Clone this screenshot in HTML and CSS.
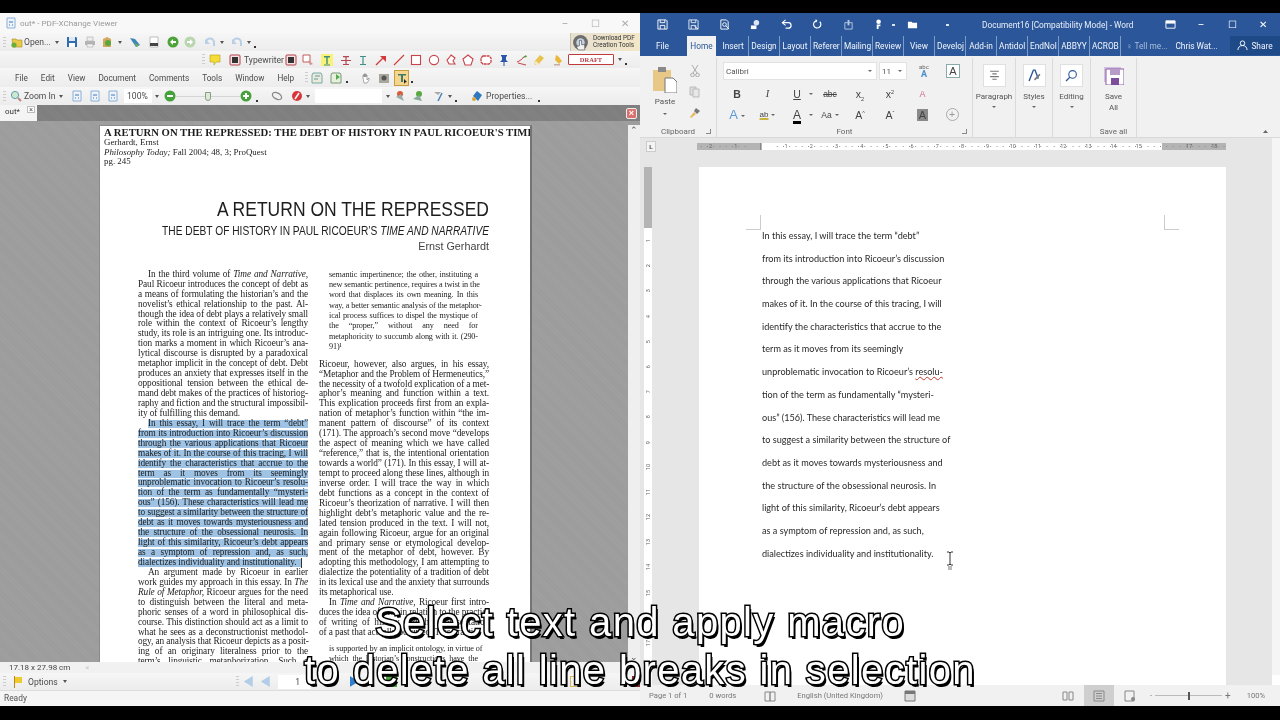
FILE: index.html
```html
<!DOCTYPE html>
<html lang="en">
<head>
    <meta charset="UTF-8">
    <title>Delete line breaks macro</title>
    <link rel="stylesheet" href="styles.css">
</head>
<body>

<svg class="defs" width="0" height="0">
    <symbol id="folder" viewBox="0 0 12 12"><path d="M1 3h4l1 1h5v7H2z" fill="#e9c94a" stroke="#a98a20" stroke-width=".6"/><circle cx="3" cy="9" r="2.6" fill="#6aae3a"/></symbol>
    <symbol id="save" viewBox="0 0 12 12"><path d="M1 1h9l1 1v9H1z" fill="#2f6db0"/><path d="M3 1h6v4H3z" fill="#dfe9f4"/><path d="M3 7h6v4H3z" fill="#fff"/></symbol>
    <symbol id="print" viewBox="0 0 12 12"><path d="M3 1h6v4H3z" fill="#eee" stroke="#999" stroke-width=".5"/><path d="M1 5h10v4H1z" fill="#b5b5b5"/><path d="M3 8h6v3H3z" fill="#f4f4f4" stroke="#999" stroke-width=".5"/></symbol>
    <symbol id="box" viewBox="0 0 12 12"><path d="M2 3l4-2 4 2v8H2z" fill="#d4a75e"/><circle cx="7" cy="7" r="3" fill="#5ba63c"/></symbol>
    <symbol id="scan" viewBox="0 0 12 12"><path d="M1 2l5 1 5 6-4 2z" fill="#3f86b8"/><path d="M5 7l5 2-2 2z" fill="#6ab04a"/></symbol>
    <symbol id="ocr" viewBox="0 0 12 12"><path d="M2 1h8v10H2z" fill="#fff" stroke="#999" stroke-width=".6"/><path d="M2 7h8v3H2z" fill="#444"/></symbol>
    <symbol id="back" viewBox="0 0 12 12"><circle cx="6" cy="6" r="5.5" fill="#4ba33a"/><path d="M3 6l3-3v2h3v2H6v2z" fill="#fff"/></symbol>
    <symbol id="fwd" viewBox="0 0 12 12"><circle cx="6" cy="6" r="5.5" fill="#b9d7ae"/><path d="M9 6L6 3v2H3v2h3v2z" fill="#fff"/></symbol>
    <symbol id="undo" viewBox="0 0 12 12"><path d="M2 7a4 4 0 0 1 8-1v4" fill="none" stroke="#b8cfe6" stroke-width="2"/><path d="M1 3v5h5z" fill="#b8cfe6"/></symbol>
    <symbol id="note" viewBox="0 0 12 12"><path d="M1 1h10v7H7l-2 3V8H1z" fill="#f6dc36" stroke="#b79f16" stroke-width=".6"/></symbol>
    <symbol id="stamp" viewBox="0 0 12 12"><rect x="1" y="1" width="10" height="10" rx="1" fill="#f3e3e3" stroke="#b4404a"/><rect x="3" y="3" width="6" height="6" fill="#333"/></symbol>
    <symbol id="edit" viewBox="0 0 12 12"><path d="M1 1h7v7H1z" fill="#fff" stroke="#c25a5a"/><path d="M6 6l5 4-3 1z" fill="#d88"/></symbol>
    <symbol id="thl" viewBox="0 0 12 12"><rect width="12" height="12" fill="#f7f27c"/><path d="M3 2h6v1.400H6.700V10H5.300V3.400H3zM3 10.500h6v1H3z" fill="#3f8f78"/></symbol>
    <symbol id="tst" viewBox="0 0 12 12"><path d="M3 2h6v1.200H6.600V10H5.400V3.200H3zM1 6h10v1H1z" fill="#b5454f"/><path d="M3 10h6v1H3z" fill="#b5454f"/></symbol>
    <symbol id="tin" viewBox="0 0 12 12"><path d="M3 2h6v1H6.600v7H9v1H3v-1h2.400V3H3z" fill="#3f8f88"/></symbol>
    <symbol id="arrow" viewBox="0 0 12 12"><path d="M1 11l8-8" stroke="#d23a3a" stroke-width="1.300"/><path d="M5 2h6v6z" fill="#d23a3a"/></symbol>
    <symbol id="line" viewBox="0 0 12 12"><path d="M1 11L11 1" stroke="#d23a3a" stroke-width="1.100"/></symbol>
    <symbol id="rect" viewBox="0 0 12 12"><rect x="1.500" y="1.500" width="9" height="9" fill="#fff" stroke="#c9434a" stroke-width="1.100"/></symbol>
    <symbol id="circ" viewBox="0 0 12 12"><circle cx="6" cy="6" r="4.600" fill="#fff" stroke="#c9434a" stroke-width="1.100"/></symbol>
    <symbol id="poly" viewBox="0 0 12 12"><path d="M6 1l4 3-2 3 2 3H4L2 6l2-2z" fill="#fff" stroke="#c9434a" stroke-width="1.100"/></symbol>
    <symbol id="pent" viewBox="0 0 12 12"><path d="M6 1l5 4-2 6H3L1 5z" fill="#fff" stroke="#c9434a" stroke-width="1.100"/></symbol>
    <symbol id="cloud" viewBox="0 0 12 12"><path d="M3 2h6l2 2v4l-2 2H3L1 8V4z" fill="#fff" stroke="#c9434a" stroke-width="1.300" stroke-dasharray="3 .6"/></symbol>
    <symbol id="pin" viewBox="0 0 12 12"><path d="M3 1h6v1l-1 1v3l2 2H2l2-2V3L3 2zM5.500 8h1v4h-1z" fill="#2b55a8"/></symbol>
    <symbol id="pen" viewBox="0 0 12 12"><path d="M1 8c3-1 5-3 8-6M2 9c3 1 5 1 8 2" stroke="#c9434a" fill="none"/><path d="M6 4l4-3 1 2z" fill="#5a9a3a"/></symbol>
    <symbol id="eraser" viewBox="0 0 12 12"><path d="M7 1l4 3-6 7H2L1 8z" fill="#e8c44e"/><path d="M1 8l2 3h2l1-1-3-3z" fill="#f4ead0"/></symbol>
    <symbol id="hl" viewBox="0 0 12 12"><path d="M3 1l2 1 4 5-3 3-4-4z" fill="#eab93a"/><path d="M1 10h6v1.500H1z" fill="#caa"/></symbol>
    <symbol id="pgl" viewBox="0 0 12 12"><path d="M2 1h8l1 2v8H1V3z" fill="#ebe9d8" stroke="#7aa"/><path d="M4 4h5M3 7h4" stroke="#69a"/></symbol>
    <symbol id="pgr" viewBox="0 0 12 12"><path d="M2 1h8l1 2v8H1V3z" fill="#e6f0dc" stroke="#797"/><path d="M6 2l4 3-4 3z" fill="#5a5"/></symbol>
    <symbol id="handi" viewBox="0 0 12 12"><path d="M3 6V3h1v2-3h1v3-3h1v3-2h1v5l2-2v2l-2 3H4z" fill="#fff" stroke="#777" stroke-width=".6"/></symbol>
    <symbol id="cam" viewBox="0 0 12 12"><rect x="1" y="2" width="10" height="9" fill="#a9a69c"/><circle cx="6" cy="6" r="2.500" fill="#555"/></symbol>
    <symbol id="tsel" viewBox="0 0 12 12"><path d="M2 2h8v1.500H7V10H5V3.500H2z" fill="#3f7a70"/><path d="M8 7l3 3-2 .5-1 1.500z" fill="#222"/></symbol>
    <symbol id="zoom" viewBox="0 0 12 12"><circle cx="5" cy="5" r="3.600" fill="#cfe9cf" stroke="#5aa0b5"/><path d="M8 8l3 3" stroke="#b87" stroke-width="2"/></symbol>
    <symbol id="pgv" viewBox="0 0 12 12"><path d="M2 1h8v10H2z" fill="#eef3fa" stroke="#8ab0d8"/><path d="M4 8h1M7 8h1M4 5h4" stroke="#3d79b5"/></symbol>
    <symbol id="minus" viewBox="0 0 12 12"><circle cx="6" cy="6" r="5.500" fill="#45a23a"/><path d="M3 5h6v2H3z" fill="#fff"/></symbol>
    <symbol id="plus" viewBox="0 0 12 12"><circle cx="6" cy="6" r="5.500" fill="#45a23a"/><path d="M3 5h2V3h2v2h2v2H7v2H5V7H3z" fill="#fff"/></symbol>
    <symbol id="clip" viewBox="0 0 12 12"><ellipse cx="6" cy="6" rx="5" ry="3" transform="rotate(30 6 6)" fill="none" stroke="#888" stroke-width="1.300"/></symbol>
    <symbol id="redc" viewBox="0 0 12 12"><circle cx="6" cy="6" r="5" fill="#d8353a"/><path d="M4 9l4-6" stroke="#fff" stroke-width="1.500"/></symbol>
    <symbol id="gear1" viewBox="0 0 12 12"><circle cx="6" cy="4" r="3" fill="#d65a3a"/><path d="M2 7l8 4-3-7z" fill="#9aa"/></symbol>
    <symbol id="gear2" viewBox="0 0 12 12"><circle cx="7" cy="4" r="3" fill="#58a83e"/><path d="M1 9l6-4 3 6z" fill="#8a9"/></symbol>
    <symbol id="wand" viewBox="0 0 12 12"><path d="M1 2h7l-3 3z" fill="#aaa"/><path d="M9 3L5 11" stroke="#4a86b8" stroke-width="1.600"/></symbol>
    <symbol id="props" viewBox="0 0 12 12"><path d="M2 6l4-5 5 4-4 6z" fill="#2f78c0"/><circle cx="3" cy="9" r="2" fill="#d9a640"/></symbol>
    <symbol id="flag" viewBox="0 0 12 12"><path d="M2 0h1v12H2z" fill="#b58a20"/><path d="M3 1h7v6H3z" fill="#f0c92e"/></symbol>
</svg>

<main class="screen">

    <!-- PDF viewer, left half -->
    <section class="viewer">
        <header class="v-title">
            <svg class="t t-app"><use href="#pgv"/></svg>
            <span class="v-name">out* - PDF-XChange Viewer</span>
            <span class="wbtn wb-min">–</span><span class="wbtn">☐</span><span class="wbtn">✕</span>
        </header>

        <div class="tb tb-1">
            <i class="grip g3"></i>
            <svg class="t g5"><use href="#folder"/></svg><span class="lb lb-open g1">Open...</span><i class="car g5"></i>
            <svg class="t g7"><use href="#save"/></svg>
            <svg class="t g6"><use href="#print"/></svg>
            <svg class="t g5"><use href="#box"/></svg><i class="car g5"></i>
            <svg class="t g7"><use href="#scan"/></svg>
            <svg class="t g7"><use href="#ocr"/></svg>
            <svg class="t g7"><use href="#back"/></svg>
            <svg class="t g5"><use href="#fwd"/></svg>
            <svg class="t g8"><use href="#undo"/></svg><i class="car g4"></i>
            <svg class="t g7"><use href="#undo"/></svg><i class="car g4"></i><i class="dot g3"></i>
            <div class="dl">
                <svg class="dl-ic" viewBox="0 0 16 16"><circle cx="8" cy="8" r="7" fill="#6e6e6e"/><circle cx="8" cy="8" r="4" fill="#c5d4e4"/><path d="M7 6h2v4h3v5H6l-2-3 3-1z" fill="#f2f2f2" stroke="#333" stroke-width=".5"/></svg>
                <span class="dl-t">Download PDF<br>Creation Tools</span>
            </div>
        </div>

        <div class="tb tb-2">
            <i class="grip"></i>
            <svg class="t g4"><use href="#note"/></svg>
            <svg class="t g8"><use href="#stamp"/></svg><span class="lb lb-type g3">Typewriter</span>
            <svg class="t g5"><use href="#stamp"/></svg>
            <svg class="t g5"><use href="#edit"/></svg>
            <svg class="t g7"><use href="#thl"/></svg>
            <svg class="t g7"><use href="#tst"/></svg>
            <svg class="t g5"><use href="#tin"/></svg>
            <svg class="t g6"><use href="#arrow"/></svg>
            <svg class="t g6"><use href="#line"/></svg>
            <svg class="t g5"><use href="#rect"/></svg>
            <svg class="t g6"><use href="#circ"/></svg>
            <svg class="t g5"><use href="#poly"/></svg>
            <svg class="t g5"><use href="#pent"/></svg>
            <svg class="t g6"><use href="#cloud"/></svg>
            <svg class="t g6"><use href="#pin"/></svg>
            <svg class="t g6"><use href="#pen"/></svg>
            <svg class="t g5"><use href="#eraser"/></svg>
            <svg class="t g8"><use href="#hl"/></svg>
            <span class="draft g3">DRAFT</span><i class="car g4"></i><i class="dot g3"></i>
        </div>

        <div class="tb tb-3">
            <nav class="menu">
                <span>File</span><span>Edit</span><span>View</span><span>Document</span><span>Comments</span><span>Tools</span><span>Window</span><span>Help</span>
            </nav>
            <i class="grip g11"></i>
            <svg class="t g3"><use href="#pgl"/></svg>
            <svg class="t g7"><use href="#pgr"/></svg><i class="dot g4"></i>
            <svg class="t g12"><use href="#handi"/></svg>
            <svg class="t g6"><use href="#cam"/></svg>
            <span class="tsel g4"><svg class="t"><use href="#tsel"/></svg></span><i class="dot g2"></i>
        </div>

        <div class="tb tb-4">
            <i class="grip g3"></i>
            <svg class="t g4"><use href="#zoom"/></svg><span class="lb lb-zoom g2">Zoom In</span><i class="car g5"></i>
            <svg class="t g8"><use href="#pgv"/></svg>
            <svg class="t g6"><use href="#pgv"/></svg>
            <svg class="t g6"><use href="#pgv"/></svg>
            <span class="field f-zoom g5">100%</span><i class="car g3"></i>
            <svg class="t g5"><use href="#minus"/></svg>
            <span class="zslide"><i></i></span>
            <svg class="t"><use href="#plus"/></svg><i class="dot g4"></i>
            <svg class="t g13"><use href="#clip"/></svg>
            <svg class="t g8"><use href="#redc"/></svg><i class="car g3"></i>
            <span class="field f-find g5"></span><i class="car g4"></i>
            <svg class="t g4"><use href="#gear1"/></svg>
            <svg class="t g6"><use href="#gear2"/></svg>
            <svg class="t g9"><use href="#wand"/></svg><i class="car g3"></i><i class="dot g3"></i>
            <svg class="t g14"><use href="#props"/></svg><span class="lb g3">Properties...</span><i class="dot g6"></i>
        </div>

        <div class="v-tabs">
            <span class="v-tab">out*<b class="v-x">×</b></span>
            <span class="v-close">×</span>
        </div>

        <div class="v-body">
            <article class="pdf">
                <h1 class="p-head">A RETURN ON THE REPRESSED: THE DEBT OF HISTORY IN PAUL RICOEUR'S TIME AND NARRATIVE</h1>
                <p class="p-meta">Gerhardt, Ernst<br><em>Philosophy Today;</em> Fall 2004; 48, 3; ProQuest<br>pg. 245</p>
                <h2 class="p-title">A RETURN ON THE REPRESSED</h2>
                <h3 class="p-sub">THE DEBT OF HISTORY IN PAUL RICOEUR’S <em>TIME AND NARRATIVE</em></h3>
                <div class="p-auth">Ernst Gerhardt</div>
                <div class="cols">
                    <div class="col">
                        <div class="ln ind last">In the third volume of <em>Time and Narrative,</em></div>
                        <div class="ln">Paul Ricoeur introduces the concept of debt as</div>
                        <div class="ln">a means of formulating the historian’s and the</div>
                        <div class="ln">novelist’s ethical relationship to the past. Al-</div>
                        <div class="ln">though the idea of debt plays a relatively small</div>
                        <div class="ln">role within the context of Ricoeur’s lengthy</div>
                        <div class="ln">study, its role is an intriguing one. Its introduc-</div>
                        <div class="ln">tion marks a moment in which Ricoeur’s ana-</div>
                        <div class="ln">lytical discourse is disrupted by a paradoxical</div>
                        <div class="ln">metaphor implicit in the concept of debt. Debt</div>
                        <div class="ln">produces an anxiety that expresses itself in the</div>
                        <div class="ln">oppositional tension between the ethical de-</div>
                        <div class="ln">mand debt makes of the practices of historiog-</div>
                        <div class="ln">raphy and fiction and the structural impossibil-</div>
                        <div class="ln end">ity of fulfilling this demand.</div>
                        <div class="hl-first"><div class="ln hl">In this essay, I will trace the term “debt”</div></div>
                        <div class="ln hl">from its introduction into Ricoeur’s discussion</div>
                        <div class="ln hl">through the various applications that Ricoeur</div>
                        <div class="ln hl">makes of it. In the course of this tracing, I will</div>
                        <div class="ln hl">identify the characteristics that accrue to the</div>
                        <div class="ln hl">term as it moves from its seemingly</div>
                        <div class="ln hl">unproblematic invocation to Ricoeur’s resolu-</div>
                        <div class="ln hl">tion of the term as fundamentally “mysteri-</div>
                        <div class="ln hl">ous” (156). These characteristics will lead me</div>
                        <div class="ln hl">to suggest a similarity between the structure of</div>
                        <div class="ln hl">debt as it moves towards mysteriousness and</div>
                        <div class="ln hl">the structure of the obsessional neurosis. In</div>
                        <div class="ln hl">light of this similarity, Ricoeur’s debt appears</div>
                        <div class="ln hl">as a symptom of repression and, as such,</div>
                        <div class="ln hl end hl-last">dialectizes individuality and institutionality.</div>
                        <div class="ln ind">An argument made by Ricoeur in earlier</div>
                        <div class="ln">work guides my approach in this essay. In <em>The</em></div>
                        <div class="ln"><em>Rule of Metaphor,</em> Ricoeur argues for the need</div>
                        <div class="ln">to distinguish between the literal and meta-</div>
                        <div class="ln">phoric senses of a word in philosophical dis-</div>
                        <div class="ln">course. This distinction should act as a limit to</div>
                        <div class="ln">what he sees as a deconstructionist methodol-</div>
                        <div class="ln">ogy, an analysis that Ricoeur depicts as a posit-</div>
                        <div class="ln">ing of an originary literalness prior to the</div>
                        <div class="ln">term’s linguistic metaphorization. Such a</div>
                    </div>
                    <div class="col">
                        <div class="quote">
                            <div class="ln">semantic impertinence; the other, instituting a</div>
                            <div class="ln">new semantic pertinence, requires a twist in the</div>
                            <div class="ln">word that displaces its own meaning. In this</div>
                            <div class="ln">way, a better semantic analysis of the metaphor-</div>
                            <div class="ln">ical process suffices to dispel the mystique of</div>
                            <div class="ln">the “proper,” without any need for</div>
                            <div class="ln">metaphoricity to succumb along with it. (290-</div>
                            <div class="ln end">91)¹</div>
                        </div>
                        <div class="ln">Ricoeur, however, also argues, in his essay,</div>
                        <div class="ln">“Metaphor and the Problem of Hermeneutics,”</div>
                        <div class="ln">the necessity of a twofold explication of a met-</div>
                        <div class="ln">aphor’s meaning and function within a text.</div>
                        <div class="ln">This explication proceeds first from an expla-</div>
                        <div class="ln">nation of metaphor’s function within “the im-</div>
                        <div class="ln">manent pattern of discourse” of its context</div>
                        <div class="ln">(171). The approach’s second move “develops</div>
                        <div class="ln">the aspect of meaning which we have called</div>
                        <div class="ln">“reference,” that is, the intentional orientation</div>
                        <div class="ln">towards a world” (171). In this essay, I will at-</div>
                        <div class="ln">tempt to proceed along these lines, although in</div>
                        <div class="ln">inverse order. I will trace the way in which</div>
                        <div class="ln">debt functions as a concept in the context of</div>
                        <div class="ln">Ricoeur’s theorization of narrative. I will then</div>
                        <div class="ln">highlight debt’s metaphoric value and the re-</div>
                        <div class="ln">lated tension produced in the text. I will not,</div>
                        <div class="ln">again following Ricoeur, argue for an original</div>
                        <div class="ln">and primary sense or etymological develop-</div>
                        <div class="ln">ment of the metaphor of debt, however. By</div>
                        <div class="ln">adopting this methodology, I am attempting to</div>
                        <div class="ln">dialectize the potentiality of a tradition of debt</div>
                        <div class="ln">in its lexical use and the anxiety that surrounds</div>
                        <div class="ln end">its metaphorical use.</div>
                        <div class="ln ind">In <em>Time and Narrative,</em> Ricoeur first intro-</div>
                        <div class="ln">duces the idea of debt in relation to the practice</div>
                        <div class="ln">of writing of history and the representation</div>
                        <div class="ln end">of a past that actually occurred. This practice</div>
                        <div class="quote q2">
                            <div class="ln">is supported by an implicit ontology, in virtue of</div>
                            <div class="ln">which the historian’s constructions have the</div>
                        </div>
                    </div>
                </div>
            </article>
            <div class="v-scroll"><span>⌃</span><span>⌄</span></div>
        </div>

        <div class="v-size"><span>17.18 x 27.98 cm</span><span class="v-lt">&lt;</span></div>

        <div class="tb tb-opt">
            <i class="grip g3"></i>
            <svg class="t g6"><use href="#flag"/></svg><span class="lb g4">Options</span><i class="car g5"></i>
            <i class="grip g169"></i>
            <span class="nav-first g5"></span><span class="nav-prev g8"></span>
            <span class="field f-page g8">1</span>
            <span class="nav-next g39"></span>
            <span class="nav-green g27"></span>
            <span class="nav-tan g173"></span>
            <span class="nav-red g51"></span>
        </div>

        <footer class="v-status">Ready</footer>
    </section>

    <!-- Word, right half -->
    <section class="word">
        <header class="w-title">
            <nav class="qat">
                <svg class="q" viewBox="0 0 12 12"><path d="M1 1h9l1 1v9H1z M3.500 1v3h5V1 M3.500 11V7h5v4" fill="none" stroke="#fff"/></svg>
                <svg class="q" viewBox="0 0 12 12"><path d="M1 1h9l1 1v9H1z M3.500 1v3h5V1 M3.500 11V7h5v4" fill="none" stroke="#e5ecf6"/><path d="M7 8l4 3" stroke="#fff"/></svg>
                <svg class="q" viewBox="0 0 12 12"><path d="M2 1h6l2 2v8H2z" fill="none" stroke="#fff"/><circle cx="6" cy="6" r="2" fill="none" stroke="#fff"/><path d="M7.500 7.500L11 11" stroke="#fff"/></svg>
                <svg class="q" viewBox="0 0 12 12"><circle cx="7" cy="4" r="3" fill="#dfe7f3"/><path d="M1 7h6v4H1z" fill="#fff"/></svg>
                <svg class="q" viewBox="0 0 12 12"><path d="M2 4h6a3 3 0 0 1 0 6H5" fill="none" stroke="#fff" stroke-width="1.300"/><path d="M5 1L1.500 4 5 7" fill="none" stroke="#fff" stroke-width="1.300"/></svg>
                <svg class="q" viewBox="0 0 12 12"><path d="M8.500 3a4 4 0 1 1-4-1" fill="none" stroke="#fff" stroke-width="1.300"/><path d="M4 0v4l2-2z" fill="#fff"/></svg>
                <svg class="q" viewBox="0 0 12 12"><path d="M2 4h8v7H2z" fill="none" stroke="#b8c8e0"/><path d="M5 1h2v6H5z" fill="#b8c8e0"/></svg>
                <svg class="q" viewBox="0 0 12 12"><circle cx="5" cy="3" r="2.500" fill="#fff"/><path d="M3 6h4v2H5v3H3z" fill="#fff"/></svg>
                <i class="w-car"></i>
                <svg class="q" viewBox="0 0 12 12"><path d="M1 3h4l1 1h5v6H1z" fill="#fff"/></svg>
                <i class="w-car w-car-b"></i>
            </nav>
            <span class="w-name">Document16 [Compatibility Mode] - Word</span>
            <nav class="w-ctrl">
                <svg class="q" viewBox="0 0 12 12"><path d="M1 2h10v8H1z" fill="none" stroke="#fff"/><path d="M1 2h10v3H1z" fill="#fff"/></svg>
                <span>–</span><span>☐</span><span>✕</span>
            </nav>
        </header>

        <div class="w-tabs">
            <span class="tab t-file">File</span>
            <span class="tab t-home">Home</span>
            <span class="tab">Insert</span>
            <span class="tab">Design</span>
            <span class="tab">Layout</span>
            <span class="tab">Referer</span>
            <span class="tab">Mailing</span>
            <span class="tab">Review</span>
            <span class="tab">View</span>
            <span class="tab">Develoj</span>
            <span class="tab">Add-in</span>
            <span class="tab">Antidol</span>
            <span class="tab">EndNol</span>
            <span class="tab">ABBYY</span>
            <span class="tab">ACROB</span>
            <span class="tab t-tell">♀ Tell me...</span>
            <span class="tab t-user">Chris Wat...</span>
            <span class="t-share">
                <svg class="share-ic" viewBox="0 0 12 12"><circle cx="6" cy="3.500" r="2.500" fill="none" stroke="#fff"/><path d="M1 11c0-3 2-5 5-5s5 2 5 5" fill="none" stroke="#fff"/></svg>Share
            </span>
        </div>

        <div class="ribbon">
            <div class="grp g-clip">
                <div class="grp-body clip-body">
                    <div class="paste">
                        <svg class="paste-ic" viewBox="0 0 24 26"><path d="M0 3h18v21H0z" fill="#e8c887"/><path d="M5 0h8v5H5z" fill="#8a8a8a"/><path d="M12 11h8l4 4v11H12z" fill="#fff" stroke="#777"/></svg>
                        <span>Paste</span><i class="r-car"></i>
                    </div>
                    <div class="clip-tools">
                        <svg class="r-ic" viewBox="0 0 12 12"><path d="M3 0l5 8M9 0L4 8" stroke="#aaa"/><circle cx="3.500" cy="10" r="1.800" fill="none" stroke="#aaa"/><circle cx="8.500" cy="10" r="1.800" fill="none" stroke="#aaa"/></svg>
                        <svg class="r-ic" viewBox="0 0 12 12"><path d="M1 1h6v8H1z" fill="#ddd" stroke="#bbb"/><path d="M4 3h6v8H4z" fill="#e8e8e8" stroke="#bbb"/></svg>
                        <svg class="r-ic" viewBox="0 0 12 12"><path d="M7 1l4 3-3 3-3-3z" fill="#777"/><path d="M5 5l2 2-5 4-1-1z" fill="#e3b95a"/></svg>
                    </div>
                </div>
                <div class="grp-lab">Clipboard<i class="launch"></i></div>
            </div>

            <div class="grp g-font">
                <div class="grp-body font-body">
                    <div class="font-top">
                        <span class="combo c-name">Calibri<i class="r-car"></i></span>
                        <span class="combo c-size">11<i class="r-car"></i></span>
                        <span class="f-abc">abc<b>A</b></span>
                        <span class="f-box">A</span>
                    </div>
                    <div class="font-grid">
                        <b class="fb">B</b><em class="fb fi">I</em><u class="fb">U</u><i class="r-car"></i><s class="fb fs">abc</s><span class="fb">x<sub>2</sub></span><span class="fb">x<sup>2</sup></span><span class="fb f-pink">A</span><span></span>
                        <span class="fb f-blue">A<i class="r-car"></i></span><span class="fb f-ab">ab<i class="r-car"></i></span><u class="fb f-col">A</u><i class="r-car"></i><span class="fb fs">Aa<i class="r-car"></i></span><span class="fb">A<sup>^</sup></span><span class="fb">A<sup>ˇ</sup></span><span class="fb f-grey">A</span><span class="f-circ">+</span>
                    </div>
                </div>
                <div class="grp-lab">Font<i class="launch"></i></div>
            </div>

            <div class="grp g-par">
                <div class="big-box"><svg class="big-ic" viewBox="0 0 12 12"><path d="M2 2h8M4 4.500h4M2 7h8M4 9.500h4" stroke="#777"/></svg></div>
                <span class="big-lab">Paragraph</span><i class="r-car"></i>
            </div>
            <div class="grp g-sty">
                <div class="big-box"><svg class="big-ic" viewBox="0 0 12 12"><path d="M1 11L5 1h1.500l3 8" fill="none" stroke="#2b579a" stroke-width="1.300"/><path d="M6 10l5-5" stroke="#777" stroke-width="1.500"/></svg></div>
                <span class="big-lab">Styles</span><i class="r-car"></i>
            </div>
            <div class="grp g-edi">
                <div class="big-box"><svg class="big-ic" viewBox="0 0 12 12"><circle cx="7" cy="5" r="3.500" fill="none" stroke="#2b579a"/><path d="M4.500 7.500L1 11" stroke="#2b579a" stroke-width="1.300"/></svg></div>
                <span class="big-lab">Editing</span><i class="r-car"></i>
            </div>
            <div class="grp g-save">
                <svg class="save-ic" viewBox="0 0 20 18"><path d="M0 0h17v15H0z" fill="#d3bfe0"/><path d="M2 2h18v16H2z" fill="#fff" stroke="#8a5aa8"/><path d="M6 2h10v6H6z" fill="#b79bc9"/><path d="M7 11h8v7H7z" fill="#7d4c9c"/></svg>
                <span class="big-lab">Save<br>All</span>
                <div class="grp-lab">Save all</div>
            </div>
            <i class="r-up"></i>
        </div>

        <div class="w-ruler">
            <span class="tab-stop">L</span>
            <div class="ruler-bar">
                <span>2</span><span>1</span><span class="r0"></span><span>1</span><span>2</span><span>3</span><span>4</span><span>5</span><span>6</span><span>7</span><span>8</span><span>9</span><span>10</span><span>11</span><span>12</span><span>13</span><span>14</span><span>15</span><span></span><span>17</span><span>18</span>
            </div>
            <i class="s-up"></i>
        </div>

        <div class="w-doc">
            <div class="vruler">
                <span>1</span><span>2</span><span>3</span><span>4</span><span>5</span><span>6</span><span>7</span><span>8</span><span>9</span><span>10</span><span>11</span><span>12</span><span>13</span><span>14</span><span>15</span><span>16</span><span>17</span>
            </div>
            <div class="page">
                <i class="crop crop-l"></i><i class="crop crop-r"></i>
                <p class="doc-text">In this essay, I will trace the term “debt”<br>
from its introduction into Ricoeur’s discussion<br>
through the various applications that Ricoeur<br>
makes of it. In the course of this tracing, I will<br>
identify the characteristics that accrue to the<br>
term as it moves from its seemingly<br>
unproblematic invocation to Ricoeur’s <span class="squig">resolu-</span><br>
tion of the term as fundamentally “mysteri-<br>
ous” (156). These characteristics will lead me<br>
to suggest a similarity between the structure of<br>
debt as it moves towards mysteriousness and<br>
the structure of the obsessional neurosis. In<br>
light of this similarity, Ricoeur’s debt appears<br>
as a symptom of repression and, as such,<br>
dialectizes individuality and institutionality.</p>
                <svg class="ibeam" viewBox="0 0 8 20"><path d="M1 1h2l1 1 1-1h2M4 2v12M1 14h2l1-1 1 1h2" fill="none" stroke="#333"/><path d="M2 15h4v4H2z" fill="#bbb"/></svg>
            </div>
            <div class="w-scroll"><i class="s-down"></i></div>
        </div>

        <footer class="w-status">
            <span>Page 1 of 1</span>
            <span class="st-words">0 words</span>
            <svg class="st-ic st-book" viewBox="0 0 12 12"><path d="M1 2h5v9H1zM6 2h5v9H6z" fill="none" stroke="#888"/></svg>
            <span class="st-lang">English (United Kingdom)</span>
            <svg class="st-ic st-cal" viewBox="0 0 12 12"><path d="M1 1h10v10H1z" fill="#ddd" stroke="#777"/><path d="M1 1h10v3H1z" fill="#777"/></svg>
            <svg class="st-ic st-read" viewBox="0 0 12 12"><path d="M1 2h4v8H1zM7 2h4v8H7z" fill="none" stroke="#888"/></svg>
            <span class="st-print"><svg class="st-ic" viewBox="0 0 12 12"><path d="M1 1h10v10H1zM3 3.500h6M3 6h6M3 8.500h6" fill="none" stroke="#888"/></svg></span>
            <svg class="st-ic st-web" viewBox="0 0 12 12"><path d="M1 1h9v10H1z" fill="none" stroke="#888"/><circle cx="9" cy="9" r="2" fill="#888"/></svg>
            <span class="st-minus">-</span>
            <span class="st-slider"><i></i></span>
            <span class="st-plus">+</span>
            <span class="st-zoom">100%</span>
        </footer>
    </section>

    <div class="caption">Select text and apply macro<br>to delete all line breaks in selection</div>
</main>

</body>
</html>
```

FILE: styles.css
```css
* {
    box-sizing: border-box;
}

html, body {
    margin: 0;
    height: 720px;
    overflow: hidden;
    background: #000;
}

.defs {
    position: absolute;
}

.screen {
    position: relative;
    width: 1280px;
    height: 720px;
    padding: 13px 0 14px;
    display: grid;
    grid-template-columns: 640px 640px;
    font-family: Roboto, sans-serif;
    filter: blur(.35px);
}

i, b.v-x {
    font-style: normal;
    flex: none;
}

/* spacing between toolbar items */
.g1 { margin-left: 1px; }
.g2 { margin-left: 2px; }
.g3 { margin-left: 3px; }
.g4 { margin-left: 4px; }
.g5 { margin-left: 5px; }
.g6 { margin-left: 6px; }
.g7 { margin-left: 7px; }
.g8 { margin-left: 8px; }
.g9 { margin-left: 9px; }
.g11 { margin-left: 11px; }
.g12 { margin-left: 12px; }
.g13 { margin-left: 13px; }
.g14 { margin-left: 14px; }
.g27 { margin-left: 27px; }
.g39 { margin-left: 39px; }
.g51 { margin-left: 51px; }
.g169 { margin-left: 169px; }
.g173 { margin-left: 173px; }

/* ---------- PDF viewer ---------- */
.viewer {
    display: flex;
    flex-direction: column;
    background: #f0f0f0;
    color: #444;
    overflow: hidden;
}

.v-title {
    height: 20px;
    flex: none;
    display: flex;
    align-items: center;
    padding-left: 5px;
    background: #f8f8f8;
    font-size: 8.1px;
    color: #9a9a9a;
}

.t-app {
    margin-right: 3px;
}

.v-name {
    flex: 1;
}

.wbtn {
    width: 30px;
    text-align: center;
    font-size: 10px;
    color: #aaa;
}

.tb {
    display: flex;
    align-items: center;
    flex: none;
    font-size: 8.6px;
    color: #4c4c4c;
    background: linear-gradient(#f6f6f6, #ececec);
}

.tb-1 { height: 18px; }
.tb-2 { height: 17px; padding-left: 202px; }
.tb-3 { height: 19px; padding-left: 15px; }
.tb-4 { height: 18px; }

.t {
    width: 12px;
    height: 12px;
    flex: none;
}

.lb {
    flex: none;
    white-space: nowrap;
}

.lb-open { width: 26px; }
.lb-type { width: 36px; }
.lb-zoom { width: 30px; }

.grip {
    width: 3px;
    height: 11px;
    background: repeating-linear-gradient(#ccc 0 1px, transparent 1px 3px);
}

.car {
    width: 0;
    height: 0;
    border: 2.5px solid transparent;
    border-top: 3px solid #555;
    border-bottom: 0;
}

.dot {
    width: 2px;
    height: 2px;
    background: #333;
    margin-top: 9px;
}

.dl {
    margin-left: auto;
    width: 70px;
    height: 18px;
    display: flex;
    align-items: center;
    gap: 4px;
    padding-left: 1px;
    background: linear-gradient(90deg, #e6e0d0, #f3e7c8);
    border-left: 1px solid #c9c2ae;
}

.dl-ic {
    width: 17px;
    height: 17px;
}

.dl-t {
    font-size: 6.4px;
    line-height: 7px;
    color: #333;
}

.draft {
    width: 46px;
    height: 11px;
    border: 1px solid #c03a3a;
    border-radius: 1px;
    background: #fff;
    color: #b5404a;
    font: bold 6.5px/9px "Liberation Serif", serif;
    text-align: center;
}

.menu {
    display: flex;
    gap: 13px;
    font-size: 8.2px;
}

.tsel {
    width: 15px;
    height: 16px;
    display: flex;
    align-items: center;
    justify-content: center;
    background: #f5d68e;
    border: 1px solid #c89b3c;
}

.field {
    flex: none;
    height: 14px;
    background: #fff;
    line-height: 14px;
}

.f-zoom {
    width: 28px;
    padding-left: 3px;
}

.f-find {
    width: 67px;
}

.f-page {
    width: 33px;
    text-align: center;
    padding-left: 7px;
}

.zslide {
    width: 64px;
    height: 1px;
    flex: none;
    background: #d5d5d5;
    display: flex;
    justify-content: center;
    align-items: center;
}

.zslide i {
    width: 6px;
    height: 9px;
    background: #dfe9d8;
    border: 1px solid #8b9a82;
    border-radius: 0 0 3px 3px;
}

.v-tabs {
    height: 16px;
    flex: none;
    display: flex;
    justify-content: space-between;
    align-items: center;
    background: repeating-linear-gradient(45deg, #7d7d7d 0 1px, #838383 1px 2px);
}

.v-tab {
    position: relative;
    width: 37px;
    height: 16px;
    padding: 2px 0 0 5px;
    background: #f4f4f4;
    font-size: 8px;
    color: #333;
}

.v-x {
    position: absolute;
    top: 1px;
    right: 2px;
    width: 8px;
    height: 7px;
    font: normal 7px/6px "Liberation Sans", sans-serif;
    text-align: center;
    background: #fff;
    border: 1px solid #bbb;
}

.v-close {
    width: 11px;
    height: 11px;
    margin-right: 3px;
    border-radius: 2px;
    background: #d9716f;
    border: 1px solid #eee;
    color: #fff;
    font: bold 9px/9px "Liberation Sans", sans-serif;
    text-align: center;
}

.v-body {
    height: 541px;
    flex: none;
    display: flex;
    padding: 4px 0 0 99px;
    overflow: hidden;
    background: repeating-linear-gradient(45deg, #9b9b9b 0 1px, #a0a0a0 1px 2px);
}

.pdf {
    width: 433px;
    height: 700px;
    flex: none;
    padding: 0 0 0 4px;
    background: #fff;
    border-top: 1px solid #8a8a8a;
    border-left: 1px solid #8a8a8a;
    border-right: 2px solid #747474;
    color: #1d1d1d;
    font-family: "Liberation Serif", serif;
    overflow: hidden;
}

.p-head {
    margin: 1px 0 0;
    font-size: 10.7px;
    line-height: 11px;
    white-space: nowrap;
}

.p-meta {
    margin: 0;
    font-size: 8.9px;
    line-height: 9.6px;
}

.p-title {
    width: 385px;
    margin: 30px 0 0;
    font: normal 20px/24px "Liberation Sans", sans-serif;
    text-align: right;
    white-space: nowrap;
    transform: scaleX(.875);
    transform-origin: right;
}

.p-sub {
    width: 385px;
    margin: 3px 0 0;
    font: normal 11.9px/15px "Liberation Sans", sans-serif;
    text-align: right;
    white-space: nowrap;
    transform: scaleX(.858);
    transform-origin: right;
}

.p-auth {
    width: 385px;
    font: 10.8px/15px "Liberation Sans", sans-serif;
    text-align: right;
    color: #444;
}

.cols {
    display: grid;
    grid-template-columns: 170px 170px;
    column-gap: 11px;
    margin: 16px 0 0 34px;
    font-size: 9.3px;
}

.ln {
    height: 9.95px;
    line-height: 9.95px;
    white-space: nowrap;
    text-align: justify;
    text-align-last: justify;
    letter-spacing: -.1px;
}

.ln.end {
    text-align-last: left;
}

.ln.ind {
    padding-left: 10px;
}

.ln.hl {
    background: linear-gradient(#9ec3e5, #9ec3e5) center / 100% 8px no-repeat;
}

.hl-first {
    padding-left: 10px;
}

.hl-last {
    width: 164px;
    border-right: 1px solid #333;
}

.quote {
    padding: 0 11px 0 10px;
    font-size: 8.2px;
    margin-bottom: 7.5px;
}

.quote .ln {
    height: 10.3px;
    line-height: 10.3px;
}

.q2 {
    margin: 6px 0 0;
}

.v-scroll {
    width: 12px;
    margin-left: 96px;
    flex: none;
    display: flex;
    flex-direction: column;
    justify-content: space-between;
    background: #efefef;
    font: 9px/10px "Liberation Sans", sans-serif;
    text-align: center;
    color: #555;
}

.v-size {
    height: 11px;
    flex: none;
    display: flex;
    gap: 15px;
    padding-left: 9px;
    font-size: 8px;
    line-height: 11px;
    background: #f1f1f1;
}

.v-lt {
    color: #bbb;
}

.tb-opt {
    height: 17px;
}

.nav-first,
.nav-prev,
.nav-next {
    width: 9px;
    height: 11px;
    flex: none;
    background: #b3cde8;
    clip-path: polygon(100% 0, 100% 100%, 0 50%);
}

.nav-next {
    background: #2f7fd0;
    clip-path: polygon(0 0, 100% 50%, 0 100%);
}

.nav-green,
.nav-tan,
.nav-red {
    width: 11px;
    height: 11px;
    flex: none;
    background: #4aa63c;
}

.nav-tan {
    background: none;
    border: 1px solid #d9b75a;
}

.nav-red {
    background: #8a2a2a;
}

.v-status {
    flex: 1;
    padding-left: 4px;
    font-size: 8.4px;
    line-height: 15px;
    background: #f5f5f5;
    border-top: 1px solid #ddd;
    color: #555;
}

/* ---------- Word ---------- */
.word {
    display: flex;
    flex-direction: column;
    background: #e6e6e6;
    overflow: hidden;
}

.w-title {
    height: 23px;
    flex: none;
    display: flex;
    align-items: center;
    background: #2b579a;
    color: #fff;
    font-size: 8.6px;
}

.qat {
    width: 342px;
    padding-left: 17px;
    display: flex;
    align-items: center;
    gap: 20px;
}

.q {
    width: 11px;
    height: 11px;
    flex: none;
}

.w-car {
    width: 3px;
    height: 2px;
    margin: 0 -8px 0 -13px;
    background: #dce6f3;
}

.w-car-b {
    margin: 0 0 0 8px;
}

.w-name {
    width: 183px;
    white-space: nowrap;
    font-size: 8.3px;
    color: #e9eef6;
}

.w-ctrl {
    display: flex;
    align-items: center;
    gap: 19px;
    font-size: 10px;
}

.w-ctrl span {
    width: 12px;
    text-align: center;
}

.w-tabs {
    height: 20px;
    flex: none;
    display: flex;
    align-items: flex-end;
    background: #2b579a;
    color: #f2f5fa;
    font-size: 8.3px;
    white-space: nowrap;
}

.tab {
    height: 20px;
    flex: none;
    width: 31px;
    line-height: 20px;
    text-align: center;
    overflow: hidden;
    border-right: 1px solid #7f9cc6;
}

.tab:nth-child(n+3) {
    padding: 0 2px;
}

.t-file {
    width: 47px;
    padding-left: 16px;
    text-align: left;
    border: 0;
}

.t-home {
    width: 29px;
    background: #f1f1f1;
    color: #2b579a;
    border: 0;
    margin-right: 2px;
}

.t-tell {
    width: 52px;
    border: 0;
    color: #a9bcd9;
}

.t-user {
    width: 47px;
    border: 0;
}

.t-share {
    height: 19px;
    width: 51px;
    margin: 0 0 1px 10px;
    display: flex;
    align-items: center;
    justify-content: center;
    gap: 3px;
    background: #1f4a88;
}

.share-ic {
    width: 11px;
    height: 11px;
}

.ribbon {
    height: 82px;
    flex: none;
    display: flex;
    position: relative;
    background: #f1f1f1;
    color: #555;
    font-size: 8px;
    border-bottom: 1px solid #d8d8d8;
}

.grp {
    position: relative;
    flex: none;
    display: flex;
    flex-direction: column;
    align-items: center;
    height: 79px;
    margin-top: 2px;
    border-right: 1px solid #dadada;
}

.grp-body {
    flex: 1;
}

.grp-lab {
    position: relative;
    height: 12px;
    width: 100%;
    line-height: 14px;
    text-align: center;
    color: #666;
}

.launch {
    position: absolute;
    right: 5px;
    top: 4px;
    width: 5px;
    height: 5px;
    border-right: 1px solid #888;
    border-bottom: 1px solid #888;
}

.g-clip { width: 77px; }
.g-font { width: 256px; }
.g-par { width: 43px; }
.g-sty { width: 37px; }
.g-edi { width: 38px; }
.g-save { width: 46px; }

.clip-body {
    width: 100%;
    display: flex;
    padding-left: 13px;
}

.paste {
    width: 24px;
    display: flex;
    flex-direction: column;
    align-items: center;
}

.paste-ic {
    width: 24px;
    height: 26px;
    margin-top: 9px;
}

.paste span {
    margin-top: 3px;
    line-height: 12px;
}

.r-car {
    display: inline-block;
    width: 0;
    height: 0;
    margin-left: 3px;
    border: 2px solid transparent;
    border-top: 2.5px solid #666;
    border-bottom: 0;
    vertical-align: middle;
}

.paste .r-car {
    margin: 5px 0 0;
}

.clip-tools {
    margin: 7px 0 0 12px;
    display: flex;
    flex-direction: column;
    gap: 9px;
}

.r-ic {
    width: 12px;
    height: 12px;
}

.font-body {
    width: 100%;
}

.font-top {
    display: flex;
    align-items: center;
    padding: 4px 0 0 6px;
}

.combo {
    height: 18px;
    display: flex;
    align-items: center;
    justify-content: space-between;
    padding: 0 4px 0 2px;
    background: #fff;
    border: 1px solid #e2e2e2;
}

.c-name { width: 154px; }

.c-size {
    width: 28px;
    margin-left: 2px;
}

.f-abc {
    margin-left: 9px;
    width: 16px;
    font-size: 6px;
    line-height: 6px;
    text-align: center;
    color: #666;
}

.f-abc b {
    display: block;
    font-size: 9px;
    line-height: 8px;
    color: #4a90c8;
}

.f-box {
    margin-left: 14px;
    width: 14px;
    height: 14px;
    border: 1px solid #8aa;
    background: #fff;
    font: 11px/12px "Liberation Sans", sans-serif;
    text-align: center;
    color: #444;
}

.font-grid {
    display: grid;
    grid-template-columns: 24px 37px 22px 5px 34px 26px 34px 31px 28px;
    grid-auto-rows: 21px;
    margin: 3px 0 0 8px;
    align-items: center;
    justify-items: center;
    font-family: "Liberation Sans", sans-serif;
    font-size: 10.5px;
    color: #444;
}

.font-grid > .r-car {
    margin-left: 0;
}

.fb {
    white-space: nowrap;
}

.fb sub,
.fb sup {
    font-size: 5.5px;
    line-height: 0;
}

.fi {
    font-family: "Liberation Serif", serif;
}

.fs {
    font-size: 8.5px;
}

.f-pink {
    color: #d86a8a;
    font-size: 9px;
}

.f-blue {
    color: #5b9bd5;
    font-size: 13px;
}

.f-ab {
    font-size: 8px;
    text-decoration: underline 2px #c9b23e;
}

.f-col {
    font-size: 12px;
    text-decoration-thickness: 3px;
    text-decoration-color: #000;
}

.f-grey {
    padding: 0 2px;
    background: #8a8a8a;
    color: #444;
    font-size: 11px;
}

.f-circ {
    width: 13px;
    height: 13px;
    border: 1px solid #aaa;
    border-radius: 50%;
    line-height: 11px;
    text-align: center;
    color: #999;
}

.big-box {
    width: 23px;
    height: 23px;
    margin-top: 6px;
    display: flex;
    align-items: center;
    justify-content: center;
    background: #fff;
    border: 1px solid #e0e0e0;
}

.big-ic {
    width: 13px;
    height: 13px;
}

.big-lab {
    margin-top: 4px;
    line-height: 11px;
    text-align: center;
}

.g-par .r-car,
.g-sty .r-car,
.g-edi .r-car {
    margin: 4px 0 0;
}

.save-ic {
    width: 20px;
    height: 18px;
    margin-top: 9px;
}

.g-save .big-lab {
    margin-top: 6px;
    flex: 1;
}

.r-up {
    position: absolute;
    right: 12px;
    bottom: 4px;
    width: 5px;
    height: 3px;
    background: #666;
    clip-path: polygon(50% 0, 100% 100%, 0 100%);
}

.w-ruler {
    height: 17px;
    flex: none;
    display: flex;
    align-items: center;
    padding-left: 6px;
    background: #e6e6e6;
}

.tab-stop {
    width: 10px;
    height: 11px;
    font: bold 6px/10px "Liberation Sans", sans-serif;
    text-align: center;
    color: #444;
    background: #f4f4f4;
    border: 1px solid #ccc;
}

.ruler-bar {
    width: 529px;
    height: 7px;
    margin-left: 41px;
    padding-left: 1px;
    display: flex;
    background: linear-gradient(90deg, #b4b4b4 65px, #fff 65px 465px, #b4b4b4 465px);
    font-size: 5.5px;
    line-height: 7px;
    color: #666;
}

.ruler-bar span {
    width: 25.2px;
    flex: none;
    text-align: center;
    background: radial-gradient(circle, #888 .5px, transparent .8px) 0 0 / 6.3px 7px;
}

.ruler-bar .r0 {
    background: linear-gradient(#888, #888) center / 1px 100% no-repeat;
}

.s-up {
    margin-left: auto;
    width: 8px;
    height: 17px;
    background: #f5f5f5;
}

.w-doc {
    height: 530px;
    flex: none;
    display: flex;
    padding: 12px 0 0 4px;
    position: relative;
    overflow: hidden;
}

.vruler {
    width: 8px;
    flex: none;
    height: 518px;
    padding-top: 61px;
    display: flex;
    flex-direction: column;
    align-items: center;
    background: linear-gradient(#b4b4b4 61px, #fff 61px);
    font-size: 5.5px;
    color: #666;
    overflow: hidden;
}

.vruler span {
    height: 25.2px;
    flex: none;
    writing-mode: vertical-rl;
    transform: rotate(180deg);
    text-align: center;
}

.page {
    position: relative;
    width: 527px;
    height: 518px;
    flex: none;
    margin-left: 47px;
    padding: 58px 0 0 63px;
    background: #fff;
    overflow: hidden;
}

.crop {
    position: absolute;
    top: 48px;
    width: 15px;
    height: 15px;
    border-bottom: 1px solid #ccc;
}

.crop-l {
    left: 47px;
    border-right: 1px solid #ccc;
}

.crop-r {
    left: 465px;
    border-left: 1px solid #ccc;
}

.doc-text {
    margin: 0;
    font-family: Lato, sans-serif;
    font-size: 9.15px;
    line-height: 22.68px;
    color: #2a2a2a;
    white-space: nowrap;
}

.squig {
    text-decoration: underline wavy #c0392b .5px;
}

.ibeam {
    position: absolute;
    left: 247px;
    top: 384px;
    width: 8px;
    height: 20px;
}

.w-scroll {
    width: 8px;
    margin-left: auto;
    margin-top: -12px;
    height: 530px;
    background: #f5f5f5;
    display: flex;
    align-items: flex-end;
}

.s-down {
    width: 8px;
    height: 10px;
    background: #fff;
}

.w-status {
    flex: 1;
    display: flex;
    align-items: center;
    padding-left: 9px;
    background: #f1f1f1;
    font-size: 7.6px;
    color: #777;
}

.st-ic {
    width: 12px;
    height: 12px;
    flex: none;
}

.st-words { margin-left: 22px; }
.st-book { margin-left: 28px; }
.st-lang { margin-left: 21px; }
.st-cal { margin-left: 21px; }
.st-read { margin-left: 146px; }

.st-print {
    width: 30px;
    height: 100%;
    margin-left: 10px;
    display: flex;
    align-items: center;
    justify-content: center;
    background: #cfcfcf;
}

.st-web { margin-left: 10px; }
.st-minus { margin-left: 14px; }

.st-slider {
    width: 67px;
    height: 1px;
    margin-left: 3px;
    display: flex;
    align-items: center;
    justify-content: center;
    background: #bbb;
}

.st-slider i {
    width: 2px;
    height: 8px;
    background: #555;
}

.st-plus {
    margin-left: 3px;
    font-size: 10px;
}

.st-zoom { margin-left: 16px; }

/* ---------- video caption ---------- */
.caption {
    position: absolute;
    left: 0;
    right: 0;
    top: 598px;
    text-align: center;
    font-family: "Liberation Sans", sans-serif;
    font-size: 40px;
    line-height: 48px;
    letter-spacing: 1.35px;
    color: #fff;
    -webkit-text-stroke: 3px #000;
    paint-order: stroke fill;
    text-shadow: 2px 3px 0 #000;
    white-space: nowrap;
}
```
